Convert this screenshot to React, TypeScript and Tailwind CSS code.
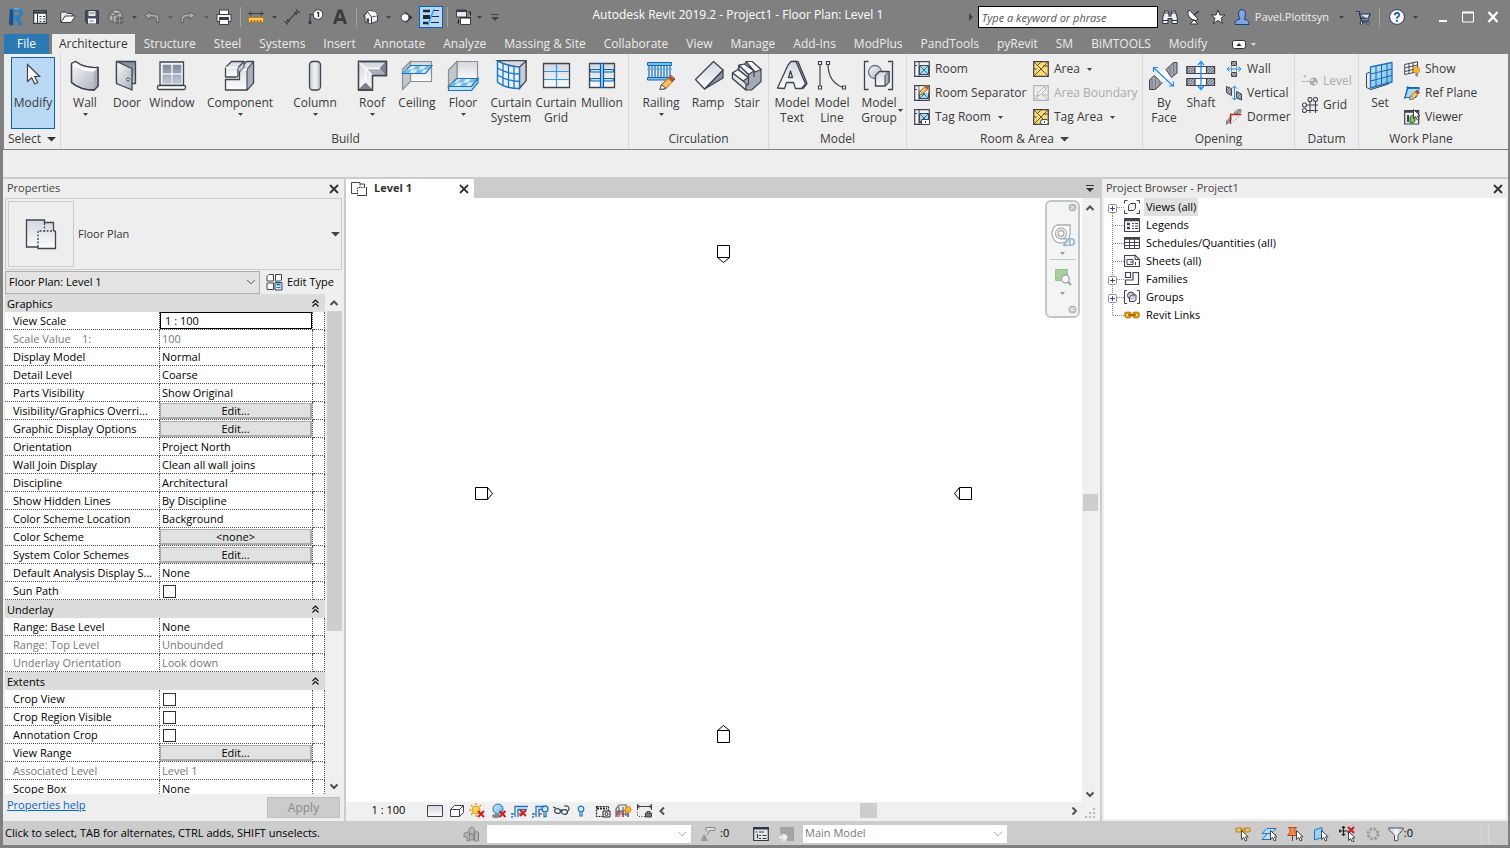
import React from 'react';

type Children = { children?: React.ReactNode };

const INK = '#3f4450';
const BLUE = '#1b74c5';

const Svg: React.FC<Children & { w?: number; h?: number; className?: string }> = ({ w = 16, h = w, className = '', children }) => (
  <svg width={w} height={h} viewBox={`0 0 ${w} ${h}`} fill="none" className={`shrink-0 ${className}`} aria-hidden="true">
    {children}
  </svg>
);

const Caret: React.FC<{ color?: string; big?: boolean }> = ({ color = '#444', big = false }) =>
  big ? (
    <Svg w={9} h={5}><path d="M0 0h9L4.500 4.500z" fill={color} /></Svg>
  ) : (
    <Svg w={5} h={3}><path d="M0 0h5L2.500 3z" fill={color} /></Svg>
  );

const Defs = () => (
  <svg width="0" height="0" className="absolute" aria-hidden="true">
    <defs>
      <linearGradient id="metal" x1="0" y1="0" x2="0" y2="1">
        <stop offset="0" stopColor="#d3d7dc" />
        <stop offset="1" stopColor="#fbfcfd" />
      </linearGradient>
      <linearGradient id="metalH" x1="0" y1="0" x2="1" y2="0">
        <stop offset="0" stopColor="#c5cad1" />
        <stop offset="0.5" stopColor="#f4f5f7" />
        <stop offset="1" stopColor="#b9bfc8" />
      </linearGradient>
      <linearGradient id="shade" x1="0" y1="0" x2="1" y2="1">
        <stop offset="0" stopColor="#fafbfc" />
        <stop offset="1" stopColor="#a9afba" />
      </linearGradient>
      <linearGradient id="glass" x1="0" y1="0" x2="0" y2="1">
        <stop offset="0" stopColor="#7f8a9c" />
        <stop offset="1" stopColor="#c4cbd6" />
      </linearGradient>
      <linearGradient id="sky" x1="0" y1="0" x2="1" y2="1">
        <stop offset="0" stopColor="#cfe9f8" />
        <stop offset="1" stopColor="#6db7e2" />
      </linearGradient>
      <pattern id="hatch" width="3" height="3" patternUnits="userSpaceOnUse">
        <rect width="3" height="3" fill="#aeb2ba" />
        <path d="M0 3L3 0" stroke="#6b7079" strokeWidth="1" />
      </pattern>
    </defs>
  </svg>
);

const Cursor: React.FC<{ x?: number; y?: number }> = ({ x = 0, y = 0 }) => (
  <path transform={`translate(${x} ${y})`} d="M.5.5v9l2.200-2 1.600 3.500 1.700-.8-1.600-3.300h2.800z" fill="#fff" stroke="#333" strokeWidth=".9" />
);

const Pencil: React.FC<{ x: number; y: number; s?: number }> = ({ x, y, s = 1 }) => (
  <g transform={`translate(${x} ${y}) scale(${s})`}>
    <path d="M0 14l1.500-5L11 0l4 3.500-9 9.500z" fill="#f4c26a" stroke="#5a4a3a" />
    <path d="M0 14l1.500-5 4.500 4z" fill="#fff" stroke="#5a4a3a" />
    <path d="M10.500.5L14.500 4 12 6.500 8 3z" fill="#b04f2c" />
    <path d="M2.500 8.500L8 3l4 3.500-6 6" stroke="#e58a1f" />
  </g>
);

/* ---------- ribbon icons, 32 x 32 ---------- */

const big: Record<string, React.ReactNode> = {
  modify: <path d="M10.500 4.500v17l4.200-3.700 3 6.200 3-1.500-3-6h5z" fill="#fff" stroke={INK} strokeWidth="1.200" />,
  wall: (
    <g stroke={INK} strokeWidth="1.300" strokeLinejoin="round">
      <path d="M2.500 3.500L6.500 1.500Q16 8.500 29 7.500V26L25 30Q11 30 2.500 22.500Z" fill="url(#shade)" />
      <path d="M2.500 3.500Q12 12 25 11.500L29 7.500 Q16 8.500 6.500 1.500z" fill="#fff" stroke="none" />
      <path d="M25 12v17.500l3.500-3.500V8z" fill="#aab0ba" stroke="none" />
      <path d="M2.500 3.500L6.500 1.500Q16 8.500 29 7.500V26L25 30Q11 30 2.500 22.500Z" />
    </g>
  ),
  door: (
    <g stroke={INK} strokeWidth="1.300" strokeLinejoin="round">
      <path d="M5.500 1.500h19v22h-19z" fill="url(#glass)" />
      <path d="M5.500 1.500L21 8.500V30L5.500 23.500z" fill="url(#shade)" />
      <circle cx="17" cy="19.500" r="1.500" fill="#fff" strokeWidth="1" />
    </g>
  ),
  window: (
    <g stroke={INK} strokeWidth="1.300">
      <path d="M4 2h23.500v23.500H4z" fill="#f1f2f4" />
      <path d="M7 5h8v8H7zM17 5h8v8h-8zM7 15h8v8H7zM17 15h8v8h-8z" fill="url(#glass)" stroke="#9aa2ae" strokeWidth=".6" />
      <rect x="1.500" y="25.500" width="28" height="4" rx="1.500" fill="#fff" />
    </g>
  ),
  component: (
    <g stroke={INK} strokeWidth="1.300" strokeLinejoin="round">
      <path d="M1.500 19.500h14V9L21 3l1.500-1.500h7V23L23 30H1.500z" fill="url(#metal)" />
      <path d="M23 9.500l6.500-8V23L23 30z" fill="#a9afba" strokeWidth="1.100" />
      <path d="M1.500 7.500L7.500 1.500H20L14 8v7.500q0 1.500-1.500 1.500h-11z" fill="url(#metal)" />
      <path d="M1.500 7.500H14M15.500 9.500H23" stroke="#fff" />
      <path d="M14 8l6-6.500v6L15.500 12" fill="#c3c8d0" strokeWidth="1" />
    </g>
  ),
  column: <rect x="10.500" y="1.500" width="11" height="28.500" rx="3.500" fill="url(#metalH)" stroke={INK} strokeWidth="1.300" />,
  roof: (
    <g stroke={INK} strokeWidth="1.300">
      <path d="M2.500 1.500h28v14H16.500v14.500h-14z" fill="url(#metal)" />
      <path d="M2.500 30l7-7 7 7zM30.500 1.500L24 8.500l6.500 7z" fill="#7d8491" strokeWidth=".6" />
      <path d="M9.500 8.500H24l6 7H16.500z" fill="#a9b0bc" stroke="none" />
      <path d="M2.500 1.500l7 7M9.500 8.500H24M9.500 8.500V23M9.500 8.500l7 7" stroke="#fff" />
      <path d="M2.500 1.500h28v14H16.500v14.500h-14z" />
    </g>
  ),
  ceiling: (
    <g strokeWidth="1.200">
      <path d="M9.500 1.500h21v20h-21z" fill="url(#metal)" stroke="#8b8f96" />
      <path d="M1.500 9L9.500 1.500v20l-8 8z" fill="#c3c6ca" stroke="#8b8f96" />
      <path d="M1.500 13.500l8-8H31l-6.500 8z" fill="#d6edfb" stroke={BLUE} />
      <path d="M5 9.500h6L8 13H2zM15 6h5l-3 3.500h-5.500zM17 9.500h6L20 13h-6zM25 6h5l-3 3.500h-5z" fill="#79b9e6" />
    </g>
  ),
  floor: (
    <g strokeWidth="1.200">
      <path d="M10 1.500h20.500V19H10z" fill="url(#metal)" stroke="#8b8f96" />
      <path d="M1.500 10L10 1.500V18l-8.500 8.500z" fill="#c3c6ca" stroke="#8b8f96" />
      <path d="M1.500 26.500l8.500-8h21l-6.500 8z" fill="#d6edfb" stroke={BLUE} />
      <path d="M5 22.500h6l-4 3.500H2.500zM14 19h5l-3 3.500h-6zM16 22.500h6l-3 3.500h-6zM24 19h6l-3 3.500h-6z" fill="#79b9e6" />
      <path d="M1.500 26.500h23L31 18.500v4L24.500 30.500h-23z" fill="#bfe0f3" stroke={BLUE} />
    </g>
  ),
  curtainSystem: (
    <g strokeWidth="1.200">
      <path d="M2.500.7H31V20l-6.500 8.500V7Q12 6 2.500.7z" fill="url(#metal)" stroke={INK} />
      <path d="M24.500 7L31 1v20l-6.500 7z" fill="#c9cdd3" stroke={INK} />
      <path d="M2.500 1Q12 6.500 24.500 7V28.500Q10 28.500 2.500 22z" fill="#e6f0f8" stroke={BLUE} strokeWidth="1.400" />
      <path d="M2.500 8Q12 14 24.500 14M2.500 15Q12 21 24.500 21.500M8 4v22M13.500 5.500v22M19 6.500v22" stroke={BLUE} strokeWidth="1.300" />
    </g>
  ),
  curtainGrid: (
    <g>
      <path d="M3.500 3.500h26v24h-26z" fill="url(#metal)" stroke={INK} strokeWidth="1.300" />
      <path d="M16.500 4v23M4 11.500h25M4 19.500h25" stroke="#2f97f0" strokeWidth="1.200" />
    </g>
  ),
  mullion: (
    <g>
      <path d="M3.500 3.500h25v24h-25z" fill="url(#metal)" stroke={INK} strokeWidth="1.300" />
      <path d="M4.500 9.500h23v2.500h-23zM4.500 18.500h23V21h-23z" fill="#bfe3f7" stroke="#0b61b0" />
      <path d="M14.500 3.500h3v24h-3z" fill="#9fd0ef" stroke="#0b61b0" strokeWidth="1.200" />
    </g>
  ),
  railing: (
    <g>
      <path d="M2.500 2.500h24v3h-24zM2.500 17.500h24v2.500h-24z" fill="#7cc0ea" stroke="#1268b3" />
      <path d="M4 6v11.500M7 6v11.500M10 6v11.500M13 6v11.500M16 6v11.500M19 6v11.500M22 6v11.500M25 6v11.500" stroke={BLUE} strokeWidth="1.300" />
      <path d="M2 9h25" stroke="#5ba7dd" />
      <Pencil x={15} y={15.500} />
    </g>
  ),
  ramp: (
    <g stroke={INK} strokeWidth="1.300" strokeLinejoin="round">
      <path d="M31 10v8l-18.500 11z" fill="#8f96a3" />
      <path d="M3.500 19.500l18-18L31 10 12.500 29z" fill="url(#metal)" />
    </g>
  ),
  stair: (
    <g stroke={INK} strokeWidth="1.200" strokeLinejoin="round">
      <path d="M15 30l-13.500-11.500V13L7 10l1-5 6-1 1.500-2.500h5L30 9.500v12L20.500 30z" fill="#a4abb7" />
      <path d="M1.500 13L7 9.500l10.500 8L12 21zM8 5.500L13.500 4l9.500 7-5.500 3.500zM15 1.500h6l9 8-6 2.500z" fill="#fafbfc" />
      <path d="M8 5.500v4.500l9.500 7.500v-3zM1.500 13v5.500L15 30v-6.500L12 21z" fill="#e3e6ea" />
      <path d="M17.500 17.500V24L15 25.500M23 11v6" />
    </g>
  ),
  modelText: (
    <g stroke={INK} strokeWidth="1.300" strokeLinejoin="round">
      <path d="M17 1.500h5L31 23.500 27 28.500z" fill="#a8aeb9" />
      <path d="M1.500 28L12 5l3-3.500h5L29.500 24l-4 4.500h-6l-2-6h-7l-2 6zM12.500 17.500h4L14.500 11z" fill="url(#metal)" fillRule="evenodd" />
    </g>
  ),
  modelLine: (
    <g stroke={INK} strokeWidth="1.200">
      <path d="M4 4v21.500M12 4Q12 22 27 27.500" />
      <path d="M2.500 1.500h3v3h-3zM2.500 26h3v3h-3zM10.500 1.500h3v3h-3zM26.500 26h3v3h-3z" fill="#fff" />
    </g>
  ),
  modelGroup: (
    <g stroke={INK} strokeWidth="1.300">
      <path d="M5.500 1.500h-4v28h4M25 1.500h4.500v28H25" />
      <circle cx="12" cy="12" r="6.500" fill="url(#shade)" stroke="#6d7380" />
      <path d="M12.500 15.500l4-4h9.500v10.500l-4 4h-9.500z" fill="url(#metal)" />
      <path d="M22 15.500v10.500l4-4V11.500z" fill="#a8aeb9" strokeWidth="1" />
    </g>
  ),
  byFace: (
    <g>
      <path d="M1.500 29.500V20L6 15.500l8.500 7L7.500 29.500zM18 9.500L25.500 2.500h3.500v10.500l-5.500 4.500z" fill="#a1a6af" stroke={INK} />
      <path d="M4 19v10M7.500 18v11M11 20.500v5M22 6.500v8M25.500 3.500v12" stroke="#70757f" />
      <path d="M7 15l9.500-6 6 8.500-8.500 5z" fill="#fff" />
      <path d="M6 8l19 18M5.500 12V7.500H10M25.500 21.500V26H21" stroke="#1f8df5" strokeWidth="1.200" />
    </g>
  ),
  shaft: (
    <g>
      <path d="M2 6.500h27.500v7H2zM2 18.500h27.500v7H2z" fill="#fff" stroke={INK} strokeWidth="1.200" />
      <path d="M2 6.500h8v7H2zM21.500 6.500h8v7h-8zM2 18.500h8v7H2zM21.500 18.500h8v7h-8z" fill="url(#hatch)" stroke={INK} strokeWidth="1.200" />
      <path d="M16 2v27M13 5l3-3.500L19 5M13 26l3 3.500 3-3.500" stroke="#1f8df5" strokeWidth="1.300" />
    </g>
  ),
  set: (
    <g strokeLinejoin="round">
      <path d="M2.500 13.500l4-1.500 18 3v9L7 29.500l-4.500-2z" fill="#e8eaee" stroke={INK} />
      <path d="M6.500 7L28 2.500V22L6.500 28z" fill="url(#sky)" stroke={BLUE} strokeWidth="1.300" />
      <path d="M12 6v20.500M17.500 5v20M23 3.500V24M6.500 14L28 9M6.500 21L28 15.500" stroke="#1268b3" />
    </g>
  ),
};

/* ---------- ribbon icons, 16 x 16 ---------- */

const roomBase = (
  <g>
    <path d="M.7.700h14.600v14.600H.7z" fill="#f3f4f6" stroke={INK} strokeWidth="1.200" />
    <path d="M5 1v14M1 4.500h2" stroke={INK} />
    <path d="M5.500 4.500h9v9h-9z" fill="#a9dcf0" stroke={INK} />
    <path d="M5.500 4.500l9 9M14.500 4.500l-9 9" stroke="#2f6f96" />
  </g>
);

const areaBase = (
  <g>
    <path d="M.7.700h14.600v14.600H.7z" fill="#fbd96b" stroke={INK} strokeWidth="1.200" />
    <path d="M1 1l14 14M15 1L1 15M8 1l-3 3M1 8h3M10 5h5" stroke={INK} strokeWidth=".9" />
  </g>
);

const small: Record<string, React.ReactNode> = {
  room: roomBase,
  roomSep: (
    <g>
      {roomBase}
      <path d="M5.500 1.500h9V8h-9z" fill="#f3f4f6" />
      <Pencil x={5} y={0} s={0.680} />
    </g>
  ),
  tagRoom: (
    <g>
      {roomBase}
      <path d="M7.500 10.500h8v5h-8z" fill="#fff" stroke={INK} /><path d="M11.500 12v2" stroke={INK} />
    </g>
  ),
  area: areaBase,
  areaBoundary: (
    <g>
      <path d="M.7.700h14.600v14.600H.7z" fill="#ececec" stroke="#b4b4b4" strokeWidth="1.200" />
      <path d="M1 15L15 1M1 10l5 5M9 9l6 6M9 10h6" stroke="#b9b9b9" />
      <path d="M4 11l1-3 6-6 2 2-6 6z" fill="#f6f6f6" stroke="#b0b0b0" />
    </g>
  ),
  tagArea: (
    <g>
      {areaBase}
      <rect x="7.500" y="10.500" width="8" height="5" rx="2.500" fill="#fff" stroke={INK} /><path d="M11.500 12v2" stroke={INK} />
    </g>
  ),
  openWall: (
    <g>
      <path d="M5.500.5h5v4h-5zM5.500 11.500h5v4h-5z" fill="url(#hatch)" stroke={INK} />
      <path d="M5.500 4.500v7M10.500 4.500v7" stroke="#999" />
      <path d="M1 8h14M3.500 5.500L1 8l2.500 2.500M12.500 5.500L15 8l-2.500 2.500" stroke="#1f8df5" />
    </g>
  ),
  vertical: (
    <g>
      <path d="M.5 1.500l5 2v7l-5-3zM10.500 6.500l5 2.500v6l-5-2z" fill="url(#hatch)" stroke={INK} />
      <path d="M8.500 1v14M6 3.500L8.500 1 11 3.500M6 12.500L8.500 15l2.500-2.500" stroke="#1f8df5" />
    </g>
  ),
  dormer: (
    <g>
      <path d="M.5 15.500V12L5 7.500v4zM8 4l4-3.500h3V3l-4 3z" fill="url(#hatch)" stroke="#70757f" strokeWidth=".8" />
      <path d="M4.500 15V5.500h11" stroke="#b3261e" strokeWidth="1.400" />
      <path d="M7 13l7-7" stroke="#999" strokeDasharray="1.500 1" />
    </g>
  ),
  level: (
    <g stroke="#ababab">
      <path d="M3 2v4M1.500 3.500L3 2M0 8.500h8" strokeDasharray="3 1" />
      <circle cx="11.500" cy="8.500" r="3.500" /><path d="M11.500 4v9M8 8.500h8" /><path d="M11.500 8.500V5A3.500 3.500 0 0 1 15 8.500zM11.500 8.500V12A3.500 3.500 0 0 1 8 8.500z" fill="#ababab" />
    </g>
  ),
  grid: (
    <g stroke={INK} strokeWidth="1.100">
      <circle cx="8" cy="2.500" r="2" fill="#fff" /><circle cx="13.500" cy="2.500" r="2" fill="#fff" />
      <circle cx="2.500" cy="8" r="2" fill="#fff" /><circle cx="2.500" cy="13.500" r="2" fill="#fff" />
      <path d="M8 4.500V16M13.500 4.500V16M4.500 8H16M4.500 13.500H16" />
    </g>
  ),
  show: (
    <g>
      <path d="M.7 3.500L13.500.7v10L.7 13.500z" fill="#fff" stroke={INK} />
      <path d="M5 2.500v10M9 1.700v10M.7 7L13.500 4M.7 10.500L13.500 7.500" stroke={INK} />
      <circle cx="12.500" cy="9" r="3.200" fill="#ffb52e" stroke="#d98b12" strokeWidth=".8" />
      <path d="M11.500 12h2.500v3.500h-2.500z" fill="#8a8f98" />
    </g>
  ),
  refPlane: (
    <g>
      <path d="M4 3.500h11.500L12 12.500H1z" fill="#a9daf2" stroke={BLUE} />
      <path d="M2.500 2.500h13M4 1L.5 14" stroke="#1268b3" strokeWidth="1.100" />
      <Pencil x={5.500} y={5} s={0.680} />
    </g>
  ),
  viewer: (
    <g>
      <path d="M.7 1.500h14v13.500H.7z" fill="#eef0f2" stroke={INK} strokeWidth="1.200" /><path d="M.5 2.500h14.500" stroke={INK} strokeWidth="2.500" />
      <path d="M3 6h2v7H3z" fill={INK} />
      <path d="M6 8l2.500-2H11v6l-2 2H6z" fill="#7fc264" stroke="#2d6b22" />
      <Cursor x={9} y={0} />
    </g>
  ),
};

/* ---------- shared controls ---------- */

const Sep = () => <div className="w-px h-5 bg-[#a3a3a3]" />;

const IconButton: React.FC<Children & { label: string; className?: string }> = ({ label, className = 'w-6', children }) => (
  <button aria-label={label} className={`h-6 shrink-0 flex items-center justify-center ${className}`}>{children}</button>
);

const Chevron: React.FC<{ dir: 'up' | 'down' | 'left' | 'right'; color?: string }> = ({ dir, color = '#505050' }) => {
  const d = { up: 'M1.500 7L5 3.500 8.500 7', down: 'M1.500 3.500L5 7 8.500 3.500', left: 'M7 1.500L3.500 5 7 8.500', right: 'M3.500 1.500L7 5 3.500 8.500' }[dir];
  return <Svg w={10}><path d={d} stroke={color} strokeWidth="2" /></Svg>;
};

const ThinChevron: React.FC<{ color?: string }> = ({ color = '#555' }) => (
  <Svg w={10} h={6} className="absolute right-1 inset-y-0 my-auto pointer-events-none"><path d="M1 .8l4 4 4-4" stroke={color} /></Svg>
);

/* ---------- title bar ---------- */

const TitleBar = () => (
  <header className="h-[34px] shrink-0 flex items-center text-white">
    <div className="flex items-center pl-1">
      <IconButton label="Revit">
        <Svg w={16} h={18}>
          <path d="M2 1l3-1h5q5 .5 5 5 0 4-3.500 5l3.500 7-4 .8L7.500 11 6.500 11v6l-4 .5L1 16z" fill="#2f7fc0" />
          <path d="M2 1l3 1.500V17l-2.500.5L1 16z" fill="#1b4f86" /><path d="M6.500 3.500h3q2 0 2 2t-2 2h-3z" fill="#808080" />
          <path d="M5 0h5l3 1.500H7z" fill="#6cb5e6" />
        </Svg>
      </IconButton>
      <IconButton label="Home">
        <Svg w={14}>
          <path d="M.7.700h12.600v12.600H.7z" fill="#fff" stroke="#333845" strokeWidth="1.200" /><path d="M0 2.500h14" stroke="#333845" strokeWidth="2.500" />
          <path d="M4.500 4v9M6.500 6.500h2M10 6.500h2M6.500 9h2M10 9h2M6.500 11.500h2M10 11.500h2" stroke="#333845" />
        </Svg>
      </IconButton>
      <IconButton label="Open" className="w-6 ml-1">
        <Svg w={16} h={13}>
          <path d="M.7 11.500V2l1-1h4l1.500 1.500h5V5" fill="#e7e9ec" stroke="#3a3e48" /><path d="M1 11.500L5 5h10.500L11 11.500z" fill="#fff" stroke="#3a3e48" />
        </Svg>
      </IconButton>
      <IconButton label="Save">
        <Svg w={14}>
          <path d="M.7.700h12.600v12.600H2L.7 12z" fill="#4a5060" stroke="#2f333d" /><path d="M3.500 1h7v5h-7z" fill="#e5e7ea" /><path d="M3 8.500h8v5H3z" fill="#f6f7f8" /><path d="M4.500 3h5M4.500 11h4" stroke="#777" />
        </Svg>
      </IconButton>
      <IconButton label="Synchronize">
        <Svg w={16}>
          <path d="M1 5l3-1.500V2l4-1.500L13 2.500 14 4v7l-6 3.500L1 11z" fill="#b2b2b2" stroke="#5f5f5f" /><path d="M1 5l4 2v6.500M5 7l4-2 4.500-1.500M4 3.500l5 1.500v3" stroke="#5f5f5f" />
          <circle cx="11.500" cy="11.500" r="4" fill="#686868" /><path d="M8 11.500h7M11.500 8v7" stroke="#8d8d8d" />
        </Svg>
      </IconButton>
      <IconButton label="Synchronize options" className="w-3"><Caret /></IconButton>
      <IconButton label="Undo"><Svg w={16} h={12}><path d="M.7 4.500L6 .7V3h4q5 .5 5 5v3.500h-2.500V8.500q0-2-2.500-2.500H6v2.500z" fill="#a9a9a9" stroke="#5e5e5e" /></Svg></IconButton>
      <IconButton label="Undo history" className="w-3"><Caret color="#5e5e5e" /></IconButton>
      <IconButton label="Redo"><Svg w={16} h={12}><path d="M15.300 4.500L10 .7V3H6Q1 3.500 1 8v3.500h2.500V8.500Q3.500 6.500 6 6h4v2.500z" fill="#a9a9a9" stroke="#5e5e5e" /></Svg></IconButton>
      <IconButton label="Redo history" className="w-3"><Caret color="#5e5e5e" /></IconButton>
      <IconButton label="Print">
        <Svg w={16}>
          <path d="M3.500 6V1h9v5" fill="#fff" stroke="#3a3e48" /><path d="M1 5.500h14v7H1z" fill="#f5f5f5" stroke="#3a3e48" /><path d="M3 9h10" stroke="#3a3e48" strokeWidth="2" /><path d="M3.500 10.500h9v5h-9z" fill="#fff" stroke="#3a3e48" />
        </Svg>
      </IconButton>
      <div className="w-2 flex justify-center"><Sep /></div>
      <IconButton label="Measure">
        <Svg w={16} h={12}>
          <path d="M.5 2.500h15M3.500 0L1 2.500 3.500 5M12.500 0L15 2.500 12.500 5" stroke="#3a3e48" /><path d="M.5 6.500h15v4.500H.5z" fill="#fbc75a" stroke="#c47f12" /><path d="M3.500 9v2M6.500 9v2M9.500 9v2M12.500 9v2" stroke="#8a5a0c" />
        </Svg>
      </IconButton>
      <IconButton label="Measure options" className="w-3"><Caret /></IconButton>
      <IconButton label="Aligned dimension">
        <Svg w={16}>
          <path d="M3 13L13 3M.5 12l3.500 3.500M12 .5L15.500 4" stroke="#3a3e48" strokeWidth="1.100" /><path d="M3 13V9.500L6.500 13zM13 3v3.500L9.500 3z" fill="#3a3e48" />
        </Svg>
      </IconButton>
      <IconButton label="Tag by category">
        <Svg w={16}><path d="M2 13V5.500h4" stroke="#3a3e48" strokeWidth="1.200" /><circle cx="10" cy="5.500" r="4.800" fill="#fff" stroke="#3a3e48" /><path d="M10.500 3v5M9 4l1.500-1" stroke="#222" strokeWidth="1.300" /><path d="M.5 12h3v3h-3z" fill="#3a3e48" /></Svg>
      </IconButton>
      <IconButton label="Text">
        <Svg w={14} h={16}><path d="M1.500 15L6 2h2l4.500 13M3.500 10.500h7" stroke="#3b3d41" strokeWidth="3" /></Svg>
      </IconButton>
      <div className="w-2 flex justify-center"><Sep /></div>
      <IconButton label="Default 3D view" className="w-5">
        <Svg w={15}>
          <path d="M.7 6L5 .8 12 1.500l2.500 4V11L7 14 2 12V6.500z" fill="#eceef0" stroke="#3a3e48" />
          <path d="M.7 6.500L4.500 1.500 8.500 7V14M8.500 7l6-1.500" stroke="#3a3e48" /><path d="M5 1l7 .7 2.300 3.500-5.600 1.300z" fill="#fff" /><path d="M3.500 8.500h2.500v4.500l-2.500-1z" fill="#444" />
        </Svg>
      </IconButton>
      <IconButton label="3D view options" className="w-4"><Caret /></IconButton>
      <IconButton label="Section" className="w-5"><Svg w={13}><path d="M5.500.5L12.500 6.500l-7 6z" fill="#33363d" /><circle cx="5" cy="6.500" r="4" fill="#fff" stroke="#3a3e48" /></Svg></IconButton>
      <button aria-label="Thin lines" className="w-6 h-[22px] ml-[3px] border border-[#0b63c0] bg-[#b7d8f5] flex items-center justify-center">
        <Svg w={18}><path d="M1 3h7M1 15h5" stroke="#222733" strokeWidth="2.500" /><path d="M1 9h7" stroke="#222733" strokeWidth="4" /><path d="M11 2.500h6M10 8.500h7M9 14.500h8" stroke="#222733" strokeWidth="1.200" /><path d="M12 1L6 17" stroke="#1f8df5" strokeWidth="1.200" /></Svg>
      </button>
      <div className="w-2 flex justify-center"><Sep /></div>
      <IconButton label="Switch windows">
        <Svg w={17}><path d="M1.500 1h10v7h-10z" fill="#e8eaed" stroke="#3a3e48" /><path d="M1 2h11" stroke="#3a3e48" strokeWidth="2" /><path d="M5.500 8.500h10v7h-10z" fill="#fff" stroke="#3a3e48" /><path d="M5 9h11M13 3h2.500v3.500M3.500 10.500V14H2" stroke="#222" /></Svg>
      </IconButton>
      <IconButton label="Switch windows options" className="w-2"><Caret /></IconButton>
      <IconButton label="Customize toolbar"><Svg w={8} h={7}><path d="M0 .5h8" stroke="#444" /><path d="M0 3h8L4 7z" fill="#444" /></Svg></IconButton>
    </div>
    <h1 className="flex-1 text-center text-xs whitespace-nowrap pb-1">Autodesk Revit 2019.2 - Project1 - Floor Plan: Level 1</h1>
    <div className="flex items-center pr-[5px]">
      <Svg w={4} h={8} className="mr-[5px]"><path d="M0 0l4 4-4 4z" fill="#444" /></Svg>
      <input aria-label="Search help" placeholder="Type a keyword or phrase" className="w-[180px] h-[22px] border border-black bg-white text-black text-[11px] px-[3px] italic placeholder:text-[#555] rounded-none" />
      <IconButton label="Search">
        <Svg w={16}>
          <path d="M.7 14.500V9l2-7h3.500l.8 4h2l.8-4h3.500l2 7v5.500H10V9.500H6v5z" fill="#eef0f2" stroke="#2f333d" /><path d="M2.500 4h4M9.500 4h4M1 11.500h5M10 11.500h5M6 7h4" stroke="#2f333d" />
        </Svg>
      </IconButton>
      <IconButton label="Communication center">
        <Svg w={16}><path d="M4 15l4-4 4 4z" fill="#fff" stroke="#2f333d" /><path d="M2 2q-1 8 8 9.500l2-1.500L4 1.500z" fill="#fff" stroke="#2f333d" /><path d="M8 6l5-4" stroke="#2f333d" strokeWidth="1.500" /></Svg>
      </IconButton>
      <IconButton label="Favorites"><Svg w={16}><path d="M8 1l2 5h5l-4 3.300 1.600 5.200L8 11.500l-4.600 3L5 9.300 1 6h5z" fill="#f8f9fa" stroke="#2f333d" /></Svg></IconButton>
      <IconButton label="Account"><Svg w={16}><path d="M8 .7q3.500 0 3.500 4.300Q11 9 10 10q5 1 5 4.500v1H1v-1Q1 11 6 10 5 9 4.500 5 4.500.7 8 .7z" fill="#7ea6e3" stroke="#1d3f80" /></Svg></IconButton>
      <button className="flex items-center text-[11px] text-[#f0f0f0] pl-px">
        Pavel.Plotitsyn
        <span className="w-6 flex justify-center"><Caret /></span>
      </button>
      <IconButton label="App store" className="w-5"><Svg w={15}><path d="M0 1.500h3L5 10h8.500M3.500 4H14l-1.500 4-7.500.5" fill="#dfe6f3" stroke="#1f2b57" strokeWidth="1.200" /><path d="M4 12h9" stroke="#1f2b57" /><circle cx="5.500" cy="13" r="1.300" fill="#fff" stroke="#1f2b57" /><circle cx="12" cy="13" r="1.300" fill="#fff" stroke="#1f2b57" /></Svg></IconButton>
      <div className="w-3 flex justify-center"><Sep /></div>
      <IconButton label="Help"><Svg w={16}><circle cx="8" cy="8" r="7.400" fill="#fff" stroke="#2a3a5c" /><path d="M5.800 6.300Q5.800 4 8 4t2.200 2q0 1.300-1.300 1.900T8 9.800" stroke="#1d5fc2" strokeWidth="1.800" /><path d="M7 11h2v1.800H7z" fill="#1d5fc2" /></Svg></IconButton>
      <IconButton label="Help options" className="w-3 mr-2.5"><Caret /></IconButton>
      <IconButton label="Minimize"><Svg w={12}><path d="M2 10h8" stroke="#fff" strokeWidth="2" /></Svg></IconButton>
      <IconButton label="Maximize" className="w-[26px]"><Svg w={12}><path d="M.5 1.500h11v9.500H.5z" stroke="#fff" /><path d="M0 1.500h12" stroke="#fff" strokeWidth="2" /></Svg></IconButton>
      <IconButton label="Close"><Svg w={12}><path d="M1.500 1l9 10M10.500 1l-9 10" stroke="#fff" strokeWidth="2.200" /></Svg></IconButton>
    </div>
  </header>
);

const tabs = ['Structure', 'Steel', 'Systems', 'Insert', 'Annotate', 'Analyze', 'Massing & Site', 'Collaborate', 'View', 'Manage', 'Add-Ins', 'ModPlus', 'PandTools', 'pyRevit', 'SM', 'BiMTOOLS', 'Modify'];

const TabBar = () => (
  <nav className="h-5 shrink-0 flex items-stretch pl-1 text-xs leading-5 text-[#ececec] whitespace-nowrap">
    <button className="w-[45px] bg-[#2a79b5] text-white">File</button>
    <button className="ml-[3px] px-[7px] bg-[#eee] text-[#333]">Architecture</button>
    {tabs.map((t) => (
      <button key={t} className="px-[9px]">{t}</button>
    ))}
    <button aria-label="Minimize ribbon" className="flex items-center gap-[5px] ml-4">
      <Svg w={14} h={9}><rect x=".5" y=".5" width="13" height="8" rx="2" fill="#fff" stroke="#333" /><path d="M4.500 6h5L7 3z" fill="#222" /></Svg>
      <Caret color="#ddd" />
    </button>
  </nav>
);

/* ---------- ribbon ---------- */

interface Tool { icon: string; label: string[]; width: string; menu?: boolean; sideMenu?: boolean }

const BigTool: React.FC<{ tool: Tool }> = ({ tool }) => (
  <button className={`relative shrink-0 flex flex-col items-center pt-[3px] ${tool.width}`}>
    <Svg w={32}>{big[tool.icon]}</Svg>
    <span className="mt-[3px] leading-[15px] whitespace-nowrap flex flex-col items-center">
      {tool.label.map((l) => <span key={l}>{l}</span>)}
    </span>
    {tool.menu && <span className="mt-[3px]"><Caret /></span>}
    {tool.sideMenu && <span className="absolute right-[2px] top-[52px]"><Caret /></span>}
  </button>
);

const SmallTool: React.FC<{ icon: string; label: string; menu?: boolean; disabled?: boolean }> = ({ icon, label, menu, disabled }) => (
  <button disabled={disabled} className={`h-6 flex items-center gap-[5px] whitespace-nowrap ${disabled ? 'text-[#ababab]' : ''}`}>
    <Svg w={16}>{small[icon]}</Svg>
    {label}
    {menu && <span className="pl-[2px]"><Caret /></span>}
  </button>
);

const Panel: React.FC<Children & { title: string; className?: string; menu?: boolean; last?: boolean }> = ({ title, className = '', menu, last, children }) => (
  <section className={`shrink-0 flex flex-col ${last ? '' : 'border-r border-[#d8d8d8]'} ${className}`}>
    <div className="flex-1 flex items-start pt-[3px]">{children}</div>
    <h2 className="h-5 flex items-center justify-center gap-[6px]">
      {title}
      {menu && <Caret big />}
    </h2>
  </section>
);

const buildTools: Tool[] = [
  { icon: 'wall', label: ['Wall'], width: 'w-11', menu: true },
  { icon: 'door', label: ['Door'], width: 'w-10' },
  { icon: 'window', label: ['Window'], width: 'w-[50px]' },
  { icon: 'component', label: ['Component'], width: 'w-[86px]', menu: true },
  { icon: 'column', label: ['Column'], width: 'w-16', menu: true },
  { icon: 'roof', label: ['Roof'], width: 'w-[50px]', menu: true },
  { icon: 'ceiling', label: ['Ceiling'], width: 'w-10' },
  { icon: 'floor', label: ['Floor'], width: 'w-[52px]', menu: true },
  { icon: 'curtainSystem', label: ['Curtain', 'System'], width: 'w-11' },
  { icon: 'curtainGrid', label: ['Curtain', 'Grid'], width: 'w-[46px]' },
  { icon: 'mullion', label: ['Mullion'], width: 'w-[46px]' },
];

const circulationTools: Tool[] = [
  { icon: 'railing', label: ['Railing'], width: 'w-12', menu: true },
  { icon: 'ramp', label: ['Ramp'], width: 'w-[46px]' },
  { icon: 'stair', label: ['Stair'], width: 'w-8' },
];

const modelTools: Tool[] = [
  { icon: 'modelText', label: ['Model', 'Text'], width: 'w-[38px]' },
  { icon: 'modelLine', label: ['Model', 'Line'], width: 'w-[42px]' },
  { icon: 'modelGroup', label: ['Model', 'Group'], width: 'w-[52px]', sideMenu: true },
];

const Ribbon = () => (
  <div className="ml-1 mr-[2px] h-[95px] shrink-0 bg-[#eee] text-xs text-[#3a3a3a] flex overflow-hidden">
    <section className="w-[57px] shrink-0 flex flex-col border-r border-[#d8d8d8]">
      <div className="flex-1 pt-[3px] pl-[7px]">
        <button className="w-11 h-[72px] border border-[#0b63c0] bg-[#b9d8f3] flex flex-col items-center pt-[2px]">
          <Svg w={32}>{big.modify}</Svg>
          <span className="mt-[3px] leading-[15px]">Modify</span>
        </button>
      </div>
      <button className="h-5 flex items-center justify-center gap-[6px]">Select <Caret big color="#333" /></button>
    </section>
    <Panel title="Build" className="w-[568px] pl-[2px]">{buildTools.map((t) => <BigTool key={t.icon} tool={t} />)}</Panel>
    <Panel title="Circulation" className="w-[140px]">
      <div className="flex pl-2">{circulationTools.map((t) => <BigTool key={t.icon} tool={t} />)}</div>
    </Panel>
    <Panel title="Model" className="w-[138px]">
      <div className="flex pl-1">{modelTools.map((t) => <BigTool key={t.icon} tool={t} />)}</div>
    </Panel>
    <Panel title="Room & Area" className="w-[236px]" menu>
      <div className="flex flex-col w-[126px] pl-[7px]">
        <SmallTool icon="room" label="Room" />
        <SmallTool icon="roomSep" label="Room Separator" />
        <SmallTool icon="tagRoom" label="Tag Room" menu />
      </div>
      <div className="flex flex-col">
        <SmallTool icon="area" label="Area" menu />
        <SmallTool icon="areaBoundary" label="Area Boundary" disabled />
        <SmallTool icon="tagArea" label="Tag Area" menu />
      </div>
    </Panel>
    <Panel title="Opening" className="w-[152px]">
      <BigTool tool={{ icon: 'byFace', label: ['By', 'Face'], width: 'w-[42px]' }} />
      <BigTool tool={{ icon: 'shaft', label: ['Shaft'], width: 'w-8' }} />
      <div className="flex flex-col pl-[9px]">
        <SmallTool icon="openWall" label="Wall" />
        <SmallTool icon="vertical" label="Vertical" />
        <SmallTool icon="dormer" label="Dormer" />
      </div>
    </Panel>
    <Panel title="Datum" className="w-16">
      <div className="flex flex-col pl-[7px] pt-3">
        <SmallTool icon="level" label="Level" disabled />
        <SmallTool icon="grid" label="Grid" />
      </div>
    </Panel>
    <Panel title="Work Plane" className="w-[124px]" last>
      <BigTool tool={{ icon: 'set', label: ['Set'], width: 'w-[42px]' }} />
      <div className="flex flex-col pl-[3px]">
        <SmallTool icon="show" label="Show" />
        <SmallTool icon="refPlane" label="Ref Plane" />
        <SmallTool icon="viewer" label="Viewer" />
      </div>
    </Panel>
  </div>
);

/* ---------- properties palette ---------- */

interface Prop { name: string; value?: string; kind?: 'text' | 'button' | 'check' | 'input'; disabled?: boolean }

const groups: { title: string; rows: Prop[] }[] = [
  {
    title: 'Graphics',
    rows: [
      { name: 'View Scale', value: '1 : 100', kind: 'input' },
      { name: 'Scale Value    1:', value: '100', disabled: true },
      { name: 'Display Model', value: 'Normal' },
      { name: 'Detail Level', value: 'Coarse' },
      { name: 'Parts Visibility', value: 'Show Original' },
      { name: 'Visibility/Graphics Overri...', value: 'Edit...', kind: 'button' },
      { name: 'Graphic Display Options', value: 'Edit...', kind: 'button' },
      { name: 'Orientation', value: 'Project North' },
      { name: 'Wall Join Display', value: 'Clean all wall joins' },
      { name: 'Discipline', value: 'Architectural' },
      { name: 'Show Hidden Lines', value: 'By Discipline' },
      { name: 'Color Scheme Location', value: 'Background' },
      { name: 'Color Scheme', value: '<none>', kind: 'button' },
      { name: 'System Color Schemes', value: 'Edit...', kind: 'button' },
      { name: 'Default Analysis Display S...', value: 'None' },
      { name: 'Sun Path', kind: 'check' },
    ],
  },
  {
    title: 'Underlay',
    rows: [
      { name: 'Range: Base Level', value: 'None' },
      { name: 'Range: Top Level', value: 'Unbounded', disabled: true },
      { name: 'Underlay Orientation', value: 'Look down', disabled: true },
    ],
  },
  {
    title: 'Extents',
    rows: [
      { name: 'Crop View', kind: 'check' },
      { name: 'Crop Region Visible', kind: 'check' },
      { name: 'Annotation Crop', kind: 'check' },
      { name: 'View Range', value: 'Edit...', kind: 'button' },
      { name: 'Associated Level', value: 'Level 1', disabled: true },
      { name: 'Scope Box', value: 'None' },
    ],
  },
];

const PropValue: React.FC<{ prop: Prop }> = ({ prop }) => {
  switch (prop.kind) {
    case 'button':
      return <button aria-label={prop.name} className="block w-full h-4 leading-[14px] bg-[#e1e1e1] border border-[#adadad] border-b-2 border-r-2">{prop.value}</button>;
    case 'check':
      return <input type="checkbox" aria-label={prop.name} className="block appearance-none w-[13px] h-[13px] ml-[3px] mt-[2px] border border-[#333] bg-white" />;
    case 'input':
      return <input aria-label={prop.name} defaultValue={prop.value} className="block w-full h-[17px] border border-black px-1 bg-white" />;
    default:
      return <span className="block pl-[2px]">{prop.value}</span>;
  }
};

const Properties = () => (
  <aside className="w-[341px] shrink-0 bg-[#eee] flex flex-col text-[11px] text-black">
    <div className="h-[19px] shrink-0 flex items-center justify-between pl-1 pr-[5px] text-[#444]">
      <h2>Properties</h2>
      <button aria-label="Close properties"><Svg w={10}><path d="M1 1l8 8M9 1L1 9" stroke="#333" strokeWidth="1.800" /></Svg></button>
    </div>
    <button className="mx-[2px] h-[72px] shrink-0 border border-[#ccc] flex items-center pl-[2px] pr-[1px] text-[#333] text-left">
      <span className="w-[66px] h-[66px] border border-[#ccc] flex items-center justify-center">
        <Svg w={32}>
          <path d="M1.500 2h18v2.500h9V13h2v17.500H13V29H1.500z" fill="url(#metal)" />
          <g stroke={INK} strokeWidth="1.300">
            <path d="M13 29H1.500V2h18v2.500h9V13" />
            <path d="M19.500 5v8M13 29V13h17.500" strokeDasharray="2 1.500" />
            <path d="M30.500 13v17.500H13V29" />
          </g>
        </Svg>
      </span>
      <span className="flex-1 pl-1">Floor Plan</span>
      <Caret big />
    </button>
    <div className="h-6 shrink-0 flex items-center pl-[2px]">
      <div className="relative w-[255px]">
        <select aria-label="Instance filter" className="block appearance-none w-full h-[23px] border border-[#adadad] bg-[#e3e3e3] pl-[3px] rounded-none">
          <option>Floor Plan: Level 1</option>
        </select>
        <ThinChevron />
      </div>
      <button className="flex items-center gap-1 ml-[6px]">
        <Svg w={17}>
          <g stroke={INK}><path d="M3 .5h4.500v6.500H1V2.500zM9.500.5h6V6l-1 1h-5zM1 9h6.500v6.500H1z" fill="#fff" /><path d="M9 8.500h7V16H9z" fill="#dceaf8" /><path d="M10.500 10.500h4" stroke={BLUE} strokeWidth="2" /><path d="M10.500 13.500h4" stroke={BLUE} /></g>
        </Svg>
        Edit Type
      </button>
    </div>
    <div className="flex-1 min-h-0 flex justify-between pl-[2px] pr-[2px]">
      <div className="w-80 overflow-hidden bg-white">
        <table className="w-full table-fixed border-separate border-spacing-0 leading-[17px]">
          <colgroup><col className="w-[155px]" /><col /><col className="w-3" /></colgroup>
          {groups.map((g) => (
            <tbody key={g.title}>
              <tr className="h-[18px] bg-[#dcdcdc]">
                <th colSpan={3} className="p-0 pl-[2px] font-normal text-left">
                  <div className="flex justify-between items-center pr-[6px]">
                    {g.title}
                    <Svg w={7} h={8}><path d="M.5 4L3.500 1l3 3M.5 7.500l3-3 3 3" stroke="#111" strokeWidth="1.200" /></Svg>
                  </div>
                </th>
              </tr>
              {g.rows.map((p) => (
                <tr key={p.name} className={`h-[18px] ${p.disabled ? 'text-[#777]' : ''}`}>
                  <td className="p-0 pl-2 border-r border-b border-dotted border-[#555] whitespace-pre overflow-hidden">{p.name}</td>
                  <td className="p-0 border-r border-b border-dotted border-[#555] whitespace-nowrap"><PropValue prop={p} /></td>
                  <td className="p-0 border-r border-b border-dotted border-[#555]" />
                </tr>
              ))}
            </tbody>
          ))}
        </table>
      </div>
      <div className="w-4 bg-[#f0f0f0] flex flex-col items-center">
        <div className="h-[17px] flex items-center"><Chevron dir="up" /></div>
        <div className="h-80 w-[15px] bg-[#cdcdcd]" />
        <div className="flex-1" />
        <div className="h-[17px] flex items-center"><Chevron dir="down" /></div>
      </div>
    </div>
    <div className="h-[27px] shrink-0 flex items-center justify-between pl-1 pr-1">
      <a href="#help" className="text-[#0a66cc] underline pb-1">Properties help</a>
      <button disabled className="w-[73px] h-[21px] border border-[#bfbfbf] bg-[#ccc] text-xs text-[#888]">Apply</button>
    </div>
  </aside>
);

/* ---------- drawing area ---------- */

const Marker: React.FC<{ className: string }> = ({ className }) => (
  <Svg w={20} className={`absolute left-1/2 top-1/2 ${className}`}>
    <path d="M4.500 1.500h12v12h-12zM4.500 13.500l6 5 6-5" stroke="#000" />
  </Svg>
);

const RedX: React.FC<{ x: number; y: number }> = ({ x, y }) => (
  <path transform={`translate(${x} ${y})`} d="M0 0l6 6M6 0L0 6" stroke="#d3191c" strokeWidth="2" />
);

const viewControls: { label: string; w: number; icon: React.ReactNode; cell: string }[] = [
  { label: 'Detail level', w: 16, cell: 'w-[22px]', icon: <path d="M.5 2.500h15v11H.5z" fill="url(#metal)" stroke={INK} /> },
  { label: 'Visual style', w: 16, cell: 'w-5', icon: <g stroke={INK}><path d="M1.500 6.500l4-4h9v7l-4 4h-9z" fill="#fff" /><path d="M1.500 6.500h9v7M10.500 6.500l4-4" /></g> },
  { label: 'Sun path', w: 16, cell: 'w-[22px]', icon: <g><circle cx="7" cy="7" r="4" fill="#ffd34f" stroke="#e39a1a" /><path d="M7 0v2M7 12v2M0 7h2M2 2l1.500 1.500M12 2l-1.500 1.500M2 12l1.500-1.500" stroke="#e39a1a" strokeWidth="1.500" /><RedX x={9} y={8} /></g> },
  { label: 'Shadows', w: 16, cell: 'w-5', icon: <g><ellipse cx="5" cy="13" rx="4" ry="2" fill="#888" /><circle cx="7" cy="6" r="5" fill="url(#sky)" stroke={BLUE} /><RedX x={8.500} y={8} /></g> },
  { label: 'Crop view', w: 17, cell: 'w-[21px]', icon: <g stroke={BLUE} strokeWidth="1.300"><path d="M4 14V3.500h13M7 14V6.500h9M0 11h3M0 14h2" /><path d="M8 11h4" stroke="#c22" /><RedX x={9} y={7} /></g> },
  { label: 'Crop region', w: 17, cell: 'w-[21px]', icon: <g stroke={BLUE} strokeWidth="1.300"><path d="M4 14V3.500h8M7 14V6.500h3M0 11h3M0 14h2" /><path d="M7 11h3" stroke="#c22" /><circle cx="13" cy="6" r="3" fill="#cfe8fa" /><path d="M12 9.500v4h2v-4" fill="#fff" /></g> },
  { label: 'Temporary hide', w: 17, cell: 'w-6', icon: <g stroke={INK} strokeWidth="1.200"><path d="M0 4l5 2M11 3q5-1 5 3l-1 2M7 8l2-1.500" /><ellipse cx="4.500" cy="8" rx="3" ry="2.300" transform="rotate(20 4.500 8)" fill="#eaf4fb" /><ellipse cx="11.500" cy="9" rx="3" ry="2.300" fill="#eaf4fb" /></g> },
  { label: 'Reveal hidden', w: 8, cell: 'w-[18px]', icon: <g stroke={BLUE} strokeWidth="1.200"><circle cx="4" cy="6" r="2.800" fill="#cfe8fa" /><path d="M3 9v4h2V9" fill="#fff" /></g> },
  { label: 'View properties', w: 16, cell: 'w-5', icon: <g stroke="#222"><path d="M1.500 3.500h12v10h-12z" strokeWidth="1.200" strokeDasharray="2 1" /><path d="M2 5.500h10" strokeWidth="2" strokeDasharray="2 1" /><path d="M8 8h7v6H8z" fill="#f0f0f0" /><circle cx="11.500" cy="11" r="1.500" fill="#fff" /></g> },
  { label: 'Analytical model', w: 17, cell: 'w-[21px]', icon: <g><path d="M1 14V6l3-4h8M4 14V4M8 14V4M1 8h10M1 11h10M11 13V3" stroke="#555b66" strokeWidth="1.100" /><path d="M2 14V9h6v5" stroke="#c22" /><circle cx="13" cy="6.500" r="3" fill="#ffb52e" stroke="#d98b12" /><path d="M12 10h2v4h-2z" fill="#777" /></g> },
  { label: 'Constraints', w: 17, cell: 'w-[21px]', icon: <g stroke={INK}><path d="M1.500 1v6M15.500 1v6M1.500 3.500h14M3.500 2L1.500 3.500l2 1.500M13.500 2l2 1.500-2 1.500" /><path d="M1.500 9v5M3 13.500h6" strokeDasharray="1 1.500" /><path d="M9.500 10h6v4h-6z" fill="#777" /><path d="M11 10V8.500h3V10" /></g> },
];

const NavBar = () => (
  <div className="absolute right-[2px] top-[2px] w-[35px] h-[118px] rounded-md border-2 border-[#c3c6c8] bg-[#f3f5f5] flex flex-col items-center">
    <Svg w={9} className="self-end mr-px mt-px"><circle cx="4.500" cy="4.500" r="4" fill="#b9bcbe" /><path d="M3 3l3 3M6 3L3 6" stroke="#fff" /></Svg>
    <button aria-label="Steering wheel" className="mt-[9px] relative w-[26px] h-[26px]">
      <Svg w={22}><g stroke="#a9adb1" strokeWidth="1.300"><path d="M7 2h13v9q-1 9-9 9T2 11q0-7 5-9z" fill="#fff" /><circle cx="11" cy="10.500" r="5.500" /><circle cx="11" cy="10.500" r="3" /></g></Svg>
      <span className="absolute right-0 bottom-0 text-[10px] leading-[10px] font-bold text-[#8fb3cf]">2D</span>
    </button>
    <span className="mt-[5px]"><Caret color="#999" /></span>
    <div className="w-[26px] h-px bg-[#c3c6c8] mt-1" />
    <button aria-label="Zoom region" className="mt-2">
      <Svg w={18}><path d="M1.500 1.500h12v11h-12z" fill="#a8cf9c" stroke="#7fae74" strokeDasharray="2 1" /><circle cx="11.500" cy="11" r="3.800" fill="#fff" stroke="#a0a4a8" strokeWidth="1.300" /><path d="M14 14l3 3" stroke="#a0a4a8" strokeWidth="2" /></Svg>
    </button>
    <span className="mt-[6px]"><Caret color="#999" /></span>
    <Svg w={9} className="self-end mr-px mt-auto mb-[2px]"><circle cx="4.500" cy="4.500" r="4" fill="#b9bcbe" /><path d="M2.500 3.500h4M2.500 5.500h4" stroke="#fff" /></Svg>
  </div>
);

const DrawingArea = () => (
  <main className="flex-1 min-w-0 flex flex-col mx-[2px] bg-[#f0f0f0]">
    <div className="h-[19px] shrink-0 bg-[#ccc] flex items-center justify-between">
      <div className="w-32 h-full bg-white flex items-center pl-[5px] pr-[5px]">
        <Svg w={16}><g stroke={INK}><path d="M1 2h8v1.500h5V6h1.500v8H6v-1H1z" fill="#fff" stroke="none" /><path d="M6 12.500H.5v-11H9V3h4.500v3" /><path d="M9 3v3.500M6.500 13V6.500H15" strokeDasharray="1.500 1" /><path d="M15.500 6v8.500H6" /></g></Svg>
        <span className="pl-[7px] flex-1 text-[11px] font-bold text-[#333]">Level 1</span>
        <button aria-label="Close view"><Svg w={10}><path d="M1 1l8 8M9 1L1 9" stroke="#333" strokeWidth="1.800" /></Svg></button>
      </div>
      <button aria-label="View list" className="pr-[6px]"><Svg w={8} h={7}><path d="M0 .5h8" stroke="#333" /><path d="M0 3h8L4 7z" fill="#333" /></Svg></button>
    </div>
    <div className="flex-1 min-h-0 flex pr-[2px]">
      <div className="relative flex-1 bg-white overflow-hidden">
        <Marker className="-translate-x-px -translate-y-[256px]" />
        <Marker className="translate-y-[224px] rotate-180" />
        <Marker className="-translate-x-[240px] -translate-y-[16px] -rotate-90" />
        <Marker className="translate-x-[239px] -translate-y-[17px] rotate-90" />
        <NavBar />
      </div>
      <div className="w-4 bg-[#f0f0f0] flex flex-col items-center justify-between">
        <div className="h-5 flex items-center"><Chevron dir="up" /></div>
        <div className="w-[15px] h-[17px] bg-[#cdcdcd]" />
        <div className="h-4 flex items-center"><Chevron dir="down" /></div>
      </div>
    </div>
    <div className="h-[19px] shrink-0 flex items-center text-[11px] pb-[2px] pr-[2px]">
      <button className="w-[81px] pl-1 shrink-0">1 : 100</button>
      {viewControls.map((c) => (
        <button key={c.label} aria-label={c.label} className={`shrink-0 ${c.cell}`}><Svg w={c.w} h={16}>{c.icon}</Svg></button>
      ))}
      <div className="flex-1 h-[15px] flex items-center justify-between pr-[5px]">
        <Chevron dir="left" />
        <div className="w-[17px] h-[15px] bg-[#cdcdcd]" />
        <Chevron dir="right" />
      </div>
      <Svg w={14} h={10} className="mt-1"><path d="M9 0h2v2H9zM9 4h2v2H9zM5 4h2v2H5zM9 8h2v2H9zM5 8h2v2H5zM1 8h2v2H1z" fill="#bbb" /></Svg>
    </div>
  </main>
);

/* ---------- project browser ---------- */

const tree: { label: string; expand?: boolean; selected?: boolean; icon: React.ReactNode }[] = [
  { label: 'Views (all)', expand: true, selected: true, icon: <g stroke={INK}><path d="M3.500 1.500H.5v3M12.500 1.500h3v3M.5 11v3.500h3M15.500 11v3.500h-3" /><path d="M4.500 6.500l2-2h5v5l-2 2h-5z" fill="#eceef1" /></g> },
  { label: 'Legends', icon: <g stroke={INK}><path d="M.5 1.500h15v13H.5z" fill="#fff" strokeWidth="1.200" /><path d="M.5 3h15" strokeWidth="2.500" /><path d="M3 7h3M3 11h3" strokeWidth="2.500" /><path d="M8 6.500h2M11 6.500h3M8 9h2M11 9h3M8 11.500h2M11 11.500h3" /></g> },
  { label: 'Schedules/Quantities (all)', icon: <g stroke={INK}><path d="M.5 2.500h15v11H.5zM5.500 4v9M10.500 4v9M.5 7.500h15M.5 10.500h15" fill="#fff" /><path d="M0 3.500h16" strokeWidth="2.500" /></g> },
  { label: 'Sheets (all)', icon: <g stroke={INK}><path d="M.5 2.500h11l4 4v7H.5z" fill="#fff" strokeWidth="1.200" /><path d="M11 1.500v5h4.500M3 6.500h6v5H3zM6 9h3M11.500 9v3" /></g> },
  { label: 'Families', expand: true, icon: <g stroke={INK}><path d="M1.500 1.500h5v5h-5zM9 1.500h5.500v12H1.500v-4.500H9z" fill="#fff" strokeWidth="1.200" /></g> },
  { label: 'Groups', expand: true, icon: <g stroke={INK}><path d="M3 1.500H.5v13H3M13 1.500h2.500v13H13" /><circle cx="7" cy="6.500" r="3.500" fill="#c4cdd9" /><path d="M5.500 8.500l2-2.500h4.500v5l-2 1.500H5.500z" fill="#dfe4eb" fillOpacity=".7" /></g> },
  { label: 'Revit Links', icon: <g stroke="#c98510" strokeWidth="1.800"><rect x="1" y="5.500" width="6" height="5" rx="2.500" fill="#fbd46a" /><rect x="9" y="5.500" width="6" height="5" rx="2.500" fill="#fbd46a" /><path d="M4 8h8" stroke="#a86a08" /></g> },
];

const Browser = () => (
  <aside className="w-[406px] shrink-0 bg-[#eee] flex flex-col text-[11px]">
    <div className="h-[19px] shrink-0 flex items-center justify-between pl-1 pr-[5px] text-[#444]">
      <h2>Project Browser - Project1</h2>
      <button aria-label="Close browser"><Svg w={10}><path d="M1 1l8 8M9 1L1 9" stroke="#333" strokeWidth="1.800" /></Svg></button>
    </div>
    <ul className="flex-1 mx-[2px] mb-[2px] bg-white text-black">
      {tree.map((n, i) => (
        <li key={n.label} className="h-[18px] flex items-center">
          <Svg w={20} h={18}>
            <path d={`M8.500 ${i === 0 ? 9 : 0}V${i === tree.length - 1 ? 9 : 18}M9 9.500h11`} stroke="#888" strokeDasharray="1 1" />
            {n.expand && <g><rect x="4.500" y="6.500" width="8" height="8" rx="1" fill="#fff" stroke="#919191" /><path d="M6 10.500h5M8.500 8v5" stroke="#2b4f9e" /></g>}
          </Svg>
          <Svg w={16}>{n.icon}</Svg>
          <span className={`ml-1 px-[2px] leading-[18px] ${n.selected ? 'bg-[#e0e0e0]' : ''}`}>{n.label}</span>
        </li>
      ))}
    </ul>
  </aside>
);

/* ---------- status bar ---------- */

const selectionTools: { label: string; icon: React.ReactNode }[] = [
  { label: 'Select links', icon: <g><g stroke="#d19312" strokeWidth="1.600"><rect x="1" y="2" width="6" height="4" rx="2" /><rect x="9" y="2" width="6" height="4" rx="2" /><path d="M5 4h6" /></g><Cursor x={6} y={4} /></g> },
  { label: 'Select underlay', icon: <g><path d="M6 2.500h9l-5 5H1zM6 8l-5 5.500h9L15 8" fill="#b9def5" stroke={BLUE} /><Cursor x={9} y={4} /></g> },
  { label: 'Select pinned', icon: <g><path d="M1.500 1.500h8l-1.500 2v3l2.500 3H.5l2.500-3v-3z" fill="#f08a4b" stroke="#b9441a" /><path d="M5.500 10v5" stroke="#444" /><Cursor x={9} y={4} /></g> },
  { label: 'Select by face', icon: <g><path d="M1.500 4L9 1.500v10L1.500 14z" fill="#9fd0f2" stroke={BLUE} /><Cursor x={8} y={4} /></g> },
  { label: 'Drag on selection', icon: <g><path d="M0 5h9M4.500.5v9M3 2l1.500-1.500L6 2M3 8l1.500 1.500L6 8M1.500 3.500L0 5l1.500 1.500" stroke="#222" strokeWidth="1.100" /><RedX x={9} y={1} /><Cursor x={9} y={5} /></g> },
  { label: 'Background processes', icon: <circle cx="8" cy="8" r="5" stroke="#9c9c9c" strokeWidth="3" strokeDasharray="2.500 1.400" /> },
];

const StatusBar = () => (
  <footer className="h-6 shrink-0 bg-[#ccc] flex items-center text-[11px] text-black pt-px">
    <p className="w-[460px] pl-[2px] shrink-0">Click to select, TAB for alternates, CTRL adds, SHIFT unselects.</p>
    <Svg w={16}><g fill="#b4b4b4" stroke="#858585"><path d="M6 3l3-2 2.500 2v5H6z" /><path d="M1 7.500L4 6l2.500 1.500V15H4v-4H1z" /><path d="M6.500 9l2-1 2 1v5h-4z" /><path d="M11.500 6.500l2-1 2 1V15h-4z" /></g></Svg>
    <div className="relative ml-2 w-[204px]">
      <select aria-label="Active workset" className="block appearance-none w-full h-[18px] bg-white rounded-none" />
      <ThinChevron color="#aaa" />
    </div>
    <Svg w={16} className="ml-[9px]"><path d="M6 1.500h9v3H9.500L7 9M6 1.500v2.500l1.500 1.500" stroke="#8a8a8a" fill="#ddd" /><path d="M1 15l2-6h2l3 6z" fill="#999" /></Svg>
    <span className="w-[37px] pl-1">:0</span>
    <button aria-label="Design options"><Svg w={16}><path d="M.7 1.500h14.600v13H.7z" fill="#e6e8ea" stroke="#333845" strokeWidth="1.200" /><path d="M.5 2.500h15" stroke="#333845" strokeWidth="2" /><path d="M2.500 6h2M6 6h5M4.500 8v4.500M6 9.500h2M9.500 9.500h4M6 12.500h2M9.500 12.500h4" stroke="#333845" strokeWidth="1.200" /></Svg></button>
    <Svg w={16} className="ml-[10px]"><path d="M1 1h14v14H8V8H1z" fill="#a4a4a4" /><path d="M0 11.500h7M4 8.500l3.500 3L4 14.500" stroke="#f2f2f2" strokeWidth="2" /></Svg>
    <div className="relative ml-2 w-[204px]">
      <select aria-label="Design option" className="block appearance-none w-full h-[18px] bg-white pl-[2px] text-[#777] rounded-none">
        <option>Main Model</option>
      </select>
      <ThinChevron color="#aaa" />
    </div>
    <div className="flex-1" />
    <div className="flex gap-[10px]">
      {selectionTools.map((t) => <button key={t.label} aria-label={t.label}><Svg w={16}>{t.icon}</Svg></button>)}
    </div>
    <button className="flex items-center ml-[7px]">
      <Svg w={16}><path d="M.7 2h14.600v1.500L10 9v5.500L6.500 15V9L.7 3.500z" fill="url(#metalH)" stroke="#4b5364" /></Svg>
      :0
    </button>
    <div className="ml-[68px] mr-[19px] w-2 h-5 border-x border-[#d9d9d9]" />
  </footer>
);

const App = () => (
  <div className="h-screen overflow-hidden flex flex-col bg-[#808080] pb-[3px] cursor-default font-['Open_Sans','Noto_Sans',sans-serif]">
    <Defs />
    <TitleBar />
    <TabBar />
    <Ribbon />
    <div className="ml-[3px] mr-[2px] mt-px h-[29px] shrink-0 bg-[#eee] border-b-2 border-[#ccc]" />
    <div className="flex-1 min-h-0 flex ml-[3px] mr-[2px] bg-[#ccc]">
      <Properties />
      <DrawingArea />
      <Browser />
    </div>
    <div className="ml-[3px] mr-[2px]"><StatusBar /></div>
  </div>
);

export default App;
